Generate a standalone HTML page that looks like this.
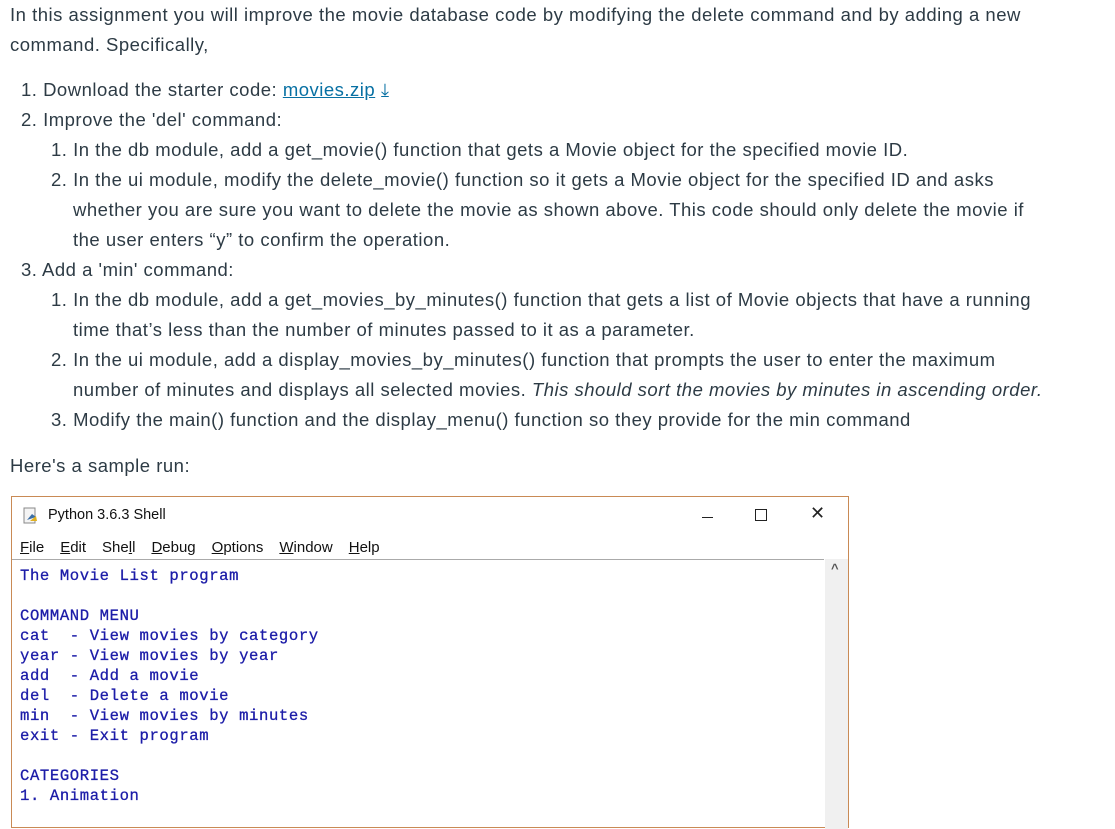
<!DOCTYPE html>
<html><head><style>
body{margin:0;width:1115px;height:810px;overflow:hidden;background:#fff;font-family:"Liberation Sans",sans-serif;font-size:18.5px;letter-spacing:0.5px;color:#2d3b45;position:relative}
.l{position:absolute;white-space:nowrap;line-height:30px}
a{color:#0770a3;text-decoration:underline}
.win{position:absolute;left:11px;top:496px;width:836px;height:330px;border:1px solid #c98a55;background:#fff;letter-spacing:0}
.mono{position:absolute;left:8px;font-family:"Liberation Mono",monospace;font-size:15.6px;color:#1c1ca8;line-height:20px;white-space:pre;letter-spacing:0.6px;-webkit-text-stroke:0.3px #1c1ca8}
.menu{position:absolute;top:42px;left:8px;font-size:15px;color:#111;font-family:"Liberation Sans",sans-serif}
.menu span{margin-right:16px}
</style></head><body>
<div class="l" style="left:10px;top:0">In this assignment you will improve the movie database code by modifying the delete command and by adding a new</div>
<div class="l" style="left:10px;top:30px">command. Specifically,</div>
<div class="l" style="left:21px;top:75px">1. Download the starter code: <a>movies.zip</a> <span style="color:#0770a3">⤓</span></div>
<div class="l" style="left:21px;top:105px">2. Improve the 'del' command:</div>
<div class="l" style="left:51px;top:135px">1. In the db module, add a get_movie() function that gets a Movie object for the specified movie ID.</div>
<div class="l" style="left:51px;top:165px">2. In the ui module, modify the delete_movie() function so it gets a Movie object for the specified ID and asks</div>
<div class="l" style="left:73px;top:195px">whether you are sure you want to delete the movie as shown above. This code should only delete the movie if</div>
<div class="l" style="left:73px;top:225px">the user enters “y” to confirm the operation.</div>
<div class="l" style="left:21px;top:255px">3. Add a 'min' command:</div>
<div class="l" style="left:51px;top:285px">1. In the db module, add a get_movies_by_minutes() function that gets a list of Movie objects that have a running</div>
<div class="l" style="left:73px;top:315px">time that’s less than the number of minutes passed to it as a parameter.</div>
<div class="l" style="left:51px;top:345px">2. In the ui module, add a display_movies_by_minutes() function that prompts the user to enter the maximum</div>
<div class="l" style="left:73px;top:375px">number of minutes and displays all selected movies. <i>This should sort the movies by minutes in ascending order.</i></div>
<div class="l" style="left:51px;top:405px">3. Modify the main() function and the display_menu() function so they provide for the min command</div>
<div class="l" style="left:10px;top:451px">Here's a sample run:</div>
<div class="win">
 <svg style="position:absolute;left:10px;top:10px" width="18" height="18" viewBox="0 0 18 18"><rect x="2" y="1" width="11" height="15" fill="#f4f4f4" stroke="#888"/><path d="M5 13 L10 7 L14 10 Z" fill="#3a6ea5"/><path d="M8 14 L14 9 L15 14Z" fill="#e0b020"/></svg>
 <div style="position:absolute;left:36px;top:10px;font-size:14.5px;color:#111">Python 3.6.3 Shell</div>
 <div style="position:absolute;left:690px;top:20px;width:11px;height:1px;background:#222"></div>
 <div style="position:absolute;left:743px;top:12px;width:10px;height:10px;border:1px solid #222"></div>
 <div style="position:absolute;left:798px;top:6px;font-size:18px;color:#222">✕</div>
 <div class="menu"><span><u>F</u>ile</span><span><u>E</u>dit</span><span>She<u>l</u>l</span><span><u>D</u>ebug</span><span><u>O</u>ptions</span><span><u>W</u>indow</span><span><u>H</u>elp</span></div>
 <div style="position:absolute;left:0;top:62px;width:812px;height:1px;background:#aaa"></div>
 <div style="position:absolute;left:813px;top:62px;width:23px;height:270px;background:#f0f0f0"></div>
 <div style="position:absolute;left:819px;top:64px;font-size:13px;font-weight:bold;color:#555">^</div>
 <div class="mono" style="top:69px">The Movie List program

COMMAND MENU
cat  - View movies by category
year - View movies by year
add  - Add a movie
del  - Delete a movie
min  - View movies by minutes
exit - Exit program

CATEGORIES
1. Animation</div>
</div>
</body></html>
